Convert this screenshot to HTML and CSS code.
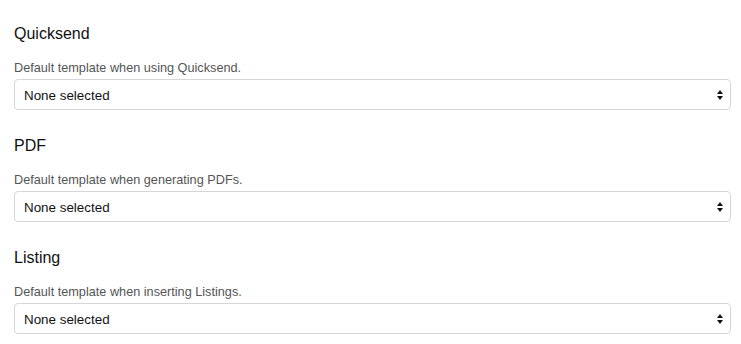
FILE: index.html
```html
<!DOCTYPE html>
<html>
<head>
<meta charset="utf-8">
<link rel="stylesheet" href="styles.css">
</head>
<body>
<div class="page">
  <section class="group">
    <h3 class="title">Quicksend</h3>
    <p class="desc">Default template when using Quicksend.</p>
    <div class="select-wrap">
      <select class="select"><option>None selected</option></select>
      <svg class="arrows" width="8" height="12" viewBox="0 0 8 12"><path d="M4 1 L7 5 L1 5 Z M1 7 L7 7 L4 11 Z" fill="#111"/></svg>
    </div>
  </section>
  <section class="group">
    <h3 class="title">PDF</h3>
    <p class="desc">Default template when generating PDFs.</p>
    <div class="select-wrap">
      <select class="select"><option>None selected</option></select>
      <svg class="arrows" width="8" height="12" viewBox="0 0 8 12"><path d="M4 1 L7 5 L1 5 Z M1 7 L7 7 L4 11 Z" fill="#111"/></svg>
    </div>
  </section>
  <section class="group">
    <h3 class="title">Listing</h3>
    <p class="desc">Default template when inserting Listings.</p>
    <div class="select-wrap">
      <select class="select"><option>None selected</option></select>
      <svg class="arrows" width="8" height="12" viewBox="0 0 8 12"><path d="M4 1 L7 5 L1 5 Z M1 7 L7 7 L4 11 Z" fill="#111"/></svg>
    </div>
  </section>
</div>
</body>
</html>
```

FILE: styles.css
```css
html, body {
  margin: 0;
  padding: 0;
  background: #fff;
}
body {
  font-family: "Liberation Sans", Arial, sans-serif;
  color: #1d1d1f;
}
.page {
  padding: 24px 10px 0 14px;
}
.group {
  display: flex;
  flex-direction: column;
  margin-bottom: 26px;
}
.title {
  margin: 0;
  font-size: 16px;
  line-height: 20px;
  font-weight: normal;
  color: #111;
}
.desc {
  margin: 16px 0 3px;
  font-size: 12.7px;
  line-height: 16px;
  color: #555;
}
.select-wrap {
  position: relative;
}
.select {
  -webkit-appearance: none;
  appearance: none;
  width: 100%;
  height: 31px;
  box-sizing: border-box;
  border: 1px solid #d6d6d6;
  border-radius: 4px;
  background: #fff;
  padding: 1px 9px 0;
  font-family: "Liberation Sans", Arial, sans-serif;
  font-size: 13.4px;
  color: #111;
  margin: 0;
}
.arrows {
  position: absolute;
  right: 7px;
  top: 10px;
  pointer-events: none;
}
```
